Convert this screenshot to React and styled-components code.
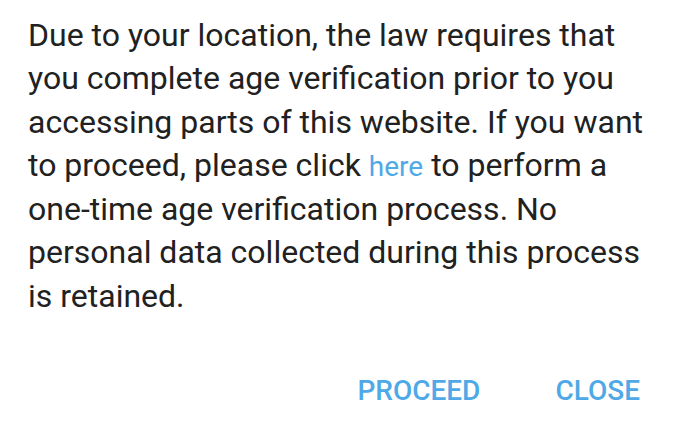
import styled, { createGlobalStyle } from 'styled-components';

const GlobalStyle = createGlobalStyle`
    html, body {
        margin: 0;
        padding: 0;
        background: #ffffff;
    }
    body {
        font-family: Roboto, "Noto Sans", sans-serif;
    }
`;

const Dialog = styled.div`
    width: 680px;
    height: 434px;
    box-sizing: border-box;
    display: flex;
    flex-direction: column;
    justify-content: space-between;
    padding: 14px 40px 27px 28px;
    background: #ffffff;
`;

const Message = styled.p`
    margin: 0 -24px 0 0;
    font-size: 32px;
    line-height: 43.3px;
    color: #212121;
    letter-spacing: 0;
`;

const Link = styled.a`
    color: #4fa9e6;
    font-size: 28px;
    text-decoration: none;
    cursor: pointer;
`;

const Actions = styled.div`
    display: flex;
    justify-content: flex-end;
    gap: 75px;
`;

const Button = styled.button`
    border: none;
    background: none;
    padding: 0;
    font-family: Roboto, sans-serif;
    font-weight: 500;
    font-size: 28px;
    line-height: 32px;
    color: #4fa9e6;
    text-transform: uppercase;
    cursor: pointer;
`;

function App() {
    return (
        <>
            <GlobalStyle />
            <Dialog>
                <Message>
                    Due to your location, the law requires that you complete
                    age verification prior to you accessing parts of this
                    website. If you want to proceed, please click{' '}
                    <Link>here</Link> to perform a one-time age verification
                    process. No personal data collected during this process is
                    retained.
                </Message>
                <Actions>
                    <Button>Proceed</Button>
                    <Button>Close</Button>
                </Actions>
            </Dialog>
        </>
    );
}

export default App;
